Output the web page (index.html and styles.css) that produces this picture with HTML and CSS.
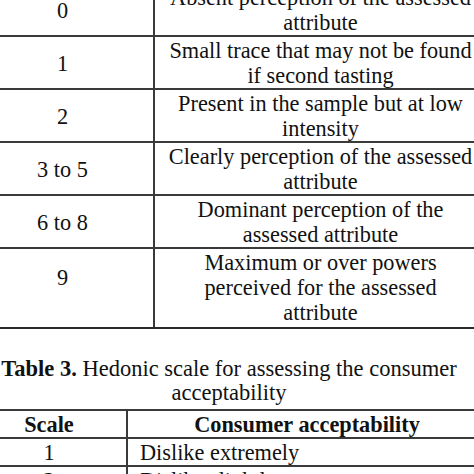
FILE: index.html
```html
<!DOCTYPE html>
<html>
<head>
<meta charset="utf-8">
<link rel="stylesheet" href="styles.css">
</head>
<body>
<div class="page">
  <div class="figure">
    <table class="scale-table">
      <tr><td class="num">0</td><td class="desc">Absent perception of the assessed<br>attribute</td></tr>
      <tr><td class="num">1</td><td class="desc">Small trace that may not be found<br>if second tasting</td></tr>
      <tr><td class="num">2</td><td class="desc">Present in the sample but at low<br>intensity</td></tr>
      <tr><td class="num">3 to 5</td><td class="desc">Clearly perception of the assessed<br>attribute</td></tr>
      <tr><td class="num">6 to 8</td><td class="desc">Dominant perception of the<br>assessed attribute</td></tr>
      <tr class="last"><td class="num">9</td><td class="desc">Maximum or over powers<br>perceived for the assessed<br>attribute</td></tr>
    </table>
    <p class="caption"><b>Table 3.</b> Hedonic scale for assessing the consumer acceptability</p>
    <table class="hedonic-table">
      <tr class="head"><th class="col-scale">Scale</th><th class="col-acc">Consumer acceptability</th></tr>
      <tr><td class="col-scale">1</td><td class="col-text">Dislike extremely</td></tr>
      <tr><td class="col-scale">2</td><td class="col-text">Dislike slightly</td></tr>
    </table>
  </div>
</div>
</body>
</html>
```
FILE: styles.css
```css
html, body {
  margin: 0;
  padding: 0;
  background: #fff;
}
.page {
  width: 474px;
  height: 474px;
  overflow: hidden;
  position: relative;
}
.figure {
  width: 514px;
  margin-left: -28px;
  margin-top: -18px;
  font-family: "Liberation Serif", "Times New Roman", serif;
  color: #111;
}
.scale-table {
  width: 514px;
  border-collapse: collapse;
  font-size: 22.3px;
  line-height: 25px;
}
.scale-table td {
  border-top: 2px solid #3a3a3a;
  padding: 1px 2px 0;
  text-align: center;
  vertical-align: middle;
}
.scale-table td.num {
  width: 177px;
  border-right: 2px solid #3a3a3a;
}
.scale-table tr.last td {
  border-bottom: 2px solid #2a2a2a;
  padding-bottom: 2px;
  vertical-align: top;
}
.scale-table tr.last td.num {
  padding-top: 16px;
}
.caption {
  margin: 28px 0 4px;
  text-align: center;
  font-size: 22.5px;
  line-height: 24px;
}
.hedonic-table {
  width: 514px;
  border-collapse: collapse;
  font-size: 22.3px;
  line-height: 23px;
}
.hedonic-table th,
.hedonic-table td {
  border-top: 2px solid #3a3a3a;
  border-bottom: 2px solid #3a3a3a;
  padding: 2px 4px 1px;
}
.hedonic-table .col-scale {
  width: 146px;
  border-right: 2px solid #3a3a3a;
  text-align: center;
}
.hedonic-table th {
  font-weight: bold;
  text-align: center;
}
.hedonic-table .col-text {
  text-align: left;
  padding-left: 12px;
}
```
